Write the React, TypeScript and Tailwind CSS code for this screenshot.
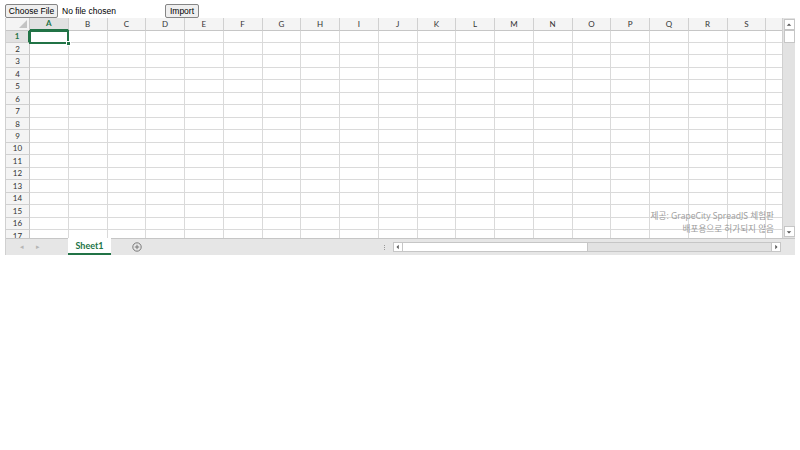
import React from "react";

const COLS = "ABCDEFGHIJKLMNOPQRST".split("");
const ROWS = Array.from({ length: 17 }, (_, i) => i + 1);

const hdrFont = { fontFamily: "Lato, 'Open Sans', sans-serif" };

const ColumnHeader = ({ label, active }: { label: string; active?: boolean }) => (
  <div
    className={
      "w-[38.75px] shrink-0 h-full flex items-center justify-center text-[8px] border-r border-[#d0d0d0] " +
      (active
        ? "bg-[#e1e1e1] text-[#217346] font-bold border-b-2 border-b-[#217346]"
        : "bg-[#f4f4f4] text-[#333] border-b border-b-[#c6c6c6]")
    }
    style={hdrFont}
  >
    {label}
  </div>
);

const Row = ({ n }: { n: number }) => (
  <div className="flex h-[12.47px] shrink-0">
    <div
      className={
        "w-[24px] shrink-0 h-full flex items-center justify-center text-[8px] border-b border-[#d0d0d0] " +
        (n === 1
          ? "bg-[#e1e1e1] text-[#217346] font-bold border-r-2 border-r-[#217346]"
          : "bg-[#f4f4f4] text-[#333] border-r border-r-[#c6c6c6]")
      }
      style={hdrFont}
    >
      {n}
    </div>
    {COLS.map((c) => (
      <div key={c} className="w-[38.75px] shrink-0 h-full bg-white border-r border-b border-[#dadada]" />
    ))}
  </div>
);

const Arrow = ({ dir }: { dir: "up" | "down" | "left" | "right" }) => {
  const pts = {
    up: "1,5 4,2 7,5",
    down: "1,3 4,6 7,3",
    left: "5,1 2,4 5,7",
    right: "3,1 6,4 3,7",
  }[dir];
  return (
    <svg width="6" height="6" viewBox="0 0 8 8">
      <polygon points={pts} fill="#555" />
    </svg>
  );
};

export default function App() {
  return (
    <div className="w-[800px] h-[450px] bg-white px-[5px] pt-[4px]" style={{ fontFamily: "'Liberation Sans', Arial, sans-serif" }}>
      {/* file picker row */}
      <div className="flex items-center h-[14px]">
        <button className="h-[14px] w-[53px] text-[8.5px] leading-none bg-[#efefef] border border-[#858585] rounded-[2px] text-black">
          Choose File
        </button>
        <span className="ml-[4px] text-[8.5px] text-black w-[103px]">No file chosen</span>
        <button className="h-[14px] w-[34px] text-[8.5px] leading-none bg-[#efefef] border border-[#858585] rounded-[2px] text-black">
          Import
        </button>
      </div>

      {/* spreadsheet */}
      <div className="w-[790px] h-[237px] flex flex-col border-l border-[#d0d0d0]">
        <div className="flex h-[220px]">
          <div className="relative flex-1 overflow-hidden flex flex-col">
            <div className="flex h-[12.5px] shrink-0">
              <div className="relative w-[24px] shrink-0 h-full bg-[#f4f4f4] border-r border-b border-[#c6c6c6]">
                <svg className="absolute right-[2px] bottom-[2px]" width="8" height="8" viewBox="0 0 8 8">
                  <polygon points="8,0 8,8 0,8" fill="#c4c4c4" />
                </svg>
              </div>
              {COLS.map((c) => (
                <ColumnHeader key={c} label={c} active={c === "A"} />
              ))}
            </div>
            {ROWS.map((n) => (
              <Row key={n} n={n} />
            ))}

            {/* active cell A1 */}
            <div className="absolute left-[23px] top-[11.5px] w-[40px] h-[14px] border-2 border-[#217346]">
              <div className="absolute right-[-4px] bottom-[-4px] w-[5px] h-[5px] bg-[#217346] border border-white" />
            </div>

            {/* trial watermark */}
            <div
              className="absolute right-[8px] bottom-[2px] text-right text-[8.6px] leading-[13px] text-[#9b9b9b]"
              style={{ fontFamily: "'Open Sans', 'Noto Sans CJK KR', sans-serif" }}
            >
              <div>제공: GrapeCity SpreadJS 체험판</div>
              <div>배포용으로 허가되지 않음</div>
            </div>
          </div>

          {/* vertical scrollbar */}
          <div className="w-[13px] shrink-0 bg-[#e2e2e2] border-l border-[#d0d0d0] flex flex-col items-center">
            <div className="w-[11px] h-[11px] mt-[1px] bg-white border border-[#c6c6c6] flex items-center justify-center">
              <Arrow dir="up" />
            </div>
            <div className="w-[11px] h-[13px] bg-white border border-[#c6c6c6]" />
            <div className="flex-1" />
            <div className="w-[11px] h-[11px] mb-[1px] bg-white border border-[#c6c6c6] flex items-center justify-center">
              <Arrow dir="down" />
            </div>
          </div>
        </div>

        {/* tab strip */}
        <div className="flex items-stretch h-[17px] bg-[#e6e6e6] border-t border-[#c6c6c6]">
          <div className="w-[62px] flex items-center pl-[14px] gap-[12px] text-[7px] text-[#b5b5b5]">
            <span>◂</span>
            <span>▸</span>
          </div>
          <div
            className="w-[43px] bg-white border-b-2 border-[#217346] flex items-center justify-center text-[9px] font-bold text-[#217346] -mt-px"
            style={hdrFont}
          >
            Sheet1
          </div>
          <div className="w-[52px] flex items-center justify-center">
            <svg width="10" height="10" viewBox="0 0 10 10">
              <circle cx="5" cy="5" r="4.2" fill="none" stroke="#6d6d6d" strokeWidth="0.9" />
              <path d="M5 2.8v4.4M2.8 5h4.4" stroke="#6d6d6d" strokeWidth="0.9" />
            </svg>
          </div>
          <div className="w-[217px]" />
          <div className="w-[8px] mr-[5px] flex flex-col items-center justify-center gap-[1px]">
            <div className="w-[1px] h-[1px] bg-[#999]" />
            <div className="w-[1px] h-[1px] bg-[#999]" />
            <div className="w-[1px] h-[1px] bg-[#999]" />
          </div>
          {/* horizontal scrollbar */}
          <div className="w-[388px] flex items-center">
            <div className="flex items-center h-[10px] w-full border border-[#c6c6c6] bg-[#e2e2e2]">
              <div className="w-[9px] h-full bg-white border-r border-[#c6c6c6] flex items-center justify-center">
                <Arrow dir="left" />
              </div>
              <div className="w-[185px] h-full bg-white border-r border-[#c6c6c6]" />
              <div className="flex-1" />
              <div className="w-[9px] h-full bg-white border-l border-[#c6c6c6] flex items-center justify-center">
                <Arrow dir="right" />
              </div>
            </div>
          </div>
        </div>
      </div>
    </div>
  );
}
